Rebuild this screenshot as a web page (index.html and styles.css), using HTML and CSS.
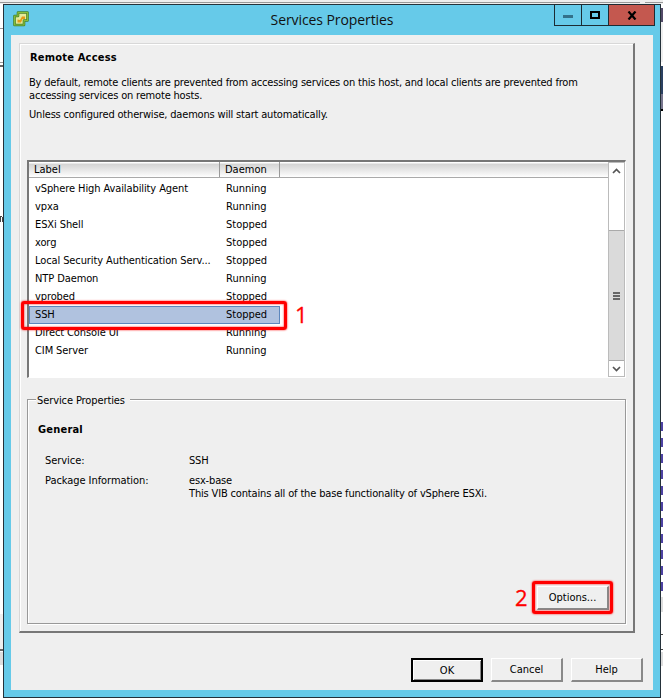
FILE: index.html
```html
<!DOCTYPE html>
<html lang="en">
<head>
<meta charset="utf-8">
<title>Services Properties</title>
<link rel="stylesheet" href="styles.css">
</head>
<body>
<svg class="backdrop" width="663" height="700" viewBox="0 0 663 700" shape-rendering="crispEdges" aria-hidden="true">
  <rect width="663" height="700" fill="#fff"/>
  <rect width="663" height="4" fill="#eee"/>
  <path d="M0 2.5H640M645 2.5H663" stroke="#999"/>
  <path d="M0 28.5H3M0 62.5H3M0 656.5H3" stroke="#999"/>
  <path d="M0 66H3" stroke="#666" stroke-width="2"/>
  <path d="M0.500 216V222M0 216.500H2M2.500 217V222" stroke="#444"/>
  <path d="M0 614H3V649H0z" fill="#eee"/>
  <path d="M0 649.500H3" stroke="#666" stroke-width="2"/>
  <path d="M0 652H3V665H0z" fill="#ddd"/>
  <path d="M661 8H663V22H661z" fill="#534a68"/>
  <path d="M661 22H663V62H661z" fill="#eee"/>
  <path d="M661 66H663V94H661z" fill="#2b4162"/>
  <path d="M661 94H663V109H661z" fill="#77758d"/>
  <path d="M661 110H663" stroke="#000" stroke-width="2"/>
  <path d="M662 422V596" stroke="#4e43a3" stroke-width="2" stroke-dasharray="9 7"/>
  <path d="M661 597H663V612H661z" fill="#ddd"/>
  <path d="M661 634.500H663M661 649.500H663" stroke="#444"/>
  <path d="M661 652H663V666H661z" fill="#ddd"/>
</svg>
<main class="window">
  <header class="titlebar">
    <svg class="app-icon" width="18" height="18" viewBox="0 0 18 18">
      <path d="M6 2.500H15.500V10.500H12V15H2.500V6H6z" fill="#e4eb9b" stroke="#46812c" stroke-width="2.600" stroke-linejoin="round"/>
      <path d="M6 2.500H15.500V10.500H12V15H2.500V6H6z" fill="none" stroke="#86bd38" stroke-width="1.200" stroke-linejoin="round"/>
      <path d="M5.500 9.500L8 10L10 6.500H13V9H10.500L9 12.500H5.500z" fill="#e69a17"/>
    </svg>
    <h1>Services Properties</h1>
    <div class="controls">
      <span class="ctl min"><i></i></span><span class="ctl max"><i></i></span><span class="ctl close"><svg width="10" height="9" viewBox="0 0 10 9"><path d="M1.500 .5L8.500 8.500M8.500 .5L1.500 8.500" stroke="#000" stroke-width="2.200"/></svg></span>
    </div>
  </header>
  <div class="client">
    <section class="panel">
      <h2>Remote Access</h2>
      <p class="intro">By default, remote clients are prevented from accessing services on this host, and local clients are prevented from<br>accessing services on remote hosts.</p>
      <p class="intro second">Unless configured otherwise, daemons will start automatically.</p>
      <div class="list">
        <div class="content">
          <div class="head"><span>Label</span><span>Daemon</span><span></span></div>
          <div class="rows">
            <div class="row"><span>vSphere High Availability Agent</span><span>Running</span></div>
            <div class="row"><span>vpxa</span><span>Running</span></div>
            <div class="row"><span>ESXi Shell</span><span>Stopped</span></div>
            <div class="row"><span>xorg</span><span>Stopped</span></div>
            <div class="row"><span>Local Security Authentication Serv...</span><span>Stopped</span></div>
            <div class="row"><span>NTP Daemon</span><span>Running</span></div>
            <div class="row"><span>vprobed</span><span>Stopped</span></div>
            <div class="row selected"><span>SSH</span><span>Stopped</span><b class="mark mark-row"></b><em class="num num-row">1</em></div>
            <div class="row"><span>Direct Console UI</span><span>Running</span></div>
            <div class="row"><span>CIM Server</span><span>Running</span></div>
          </div>
        </div>
        <div class="scroll">
          <span class="arrow"><svg width="9" height="6" viewBox="0 0 9 6"><path d="M1 5L4.500 1.500L8 5" fill="none" stroke="#555" stroke-width="1.700"/></svg></span>
          <span class="thumb"><i></i><i></i><i></i></span>
          <span class="arrow"><svg width="9" height="6" viewBox="0 0 9 6"><path d="M1 1L4.500 4.500L8 1" fill="none" stroke="#555" stroke-width="1.700"/></svg></span>
        </div>
      </div>
      <div class="group">
        <div class="legend">Service Properties</div>
        <h3>General</h3>
        <dl>
          <dt>Service:</dt><dd>SSH</dd>
          <dt>Package Information:</dt><dd>esx-base<br>This VIB contains all of the base functionality of vSphere ESXi.</dd>
        </dl>
        <div class="options"><button>Options...</button><b class="mark mark-opt"></b><em class="num num-opt">2</em></div>
      </div>
    </section>
    <footer><button class="default">OK</button><button>Cancel</button><button>Help</button></footer>
  </div>
</main>
</body>
</html>
```
FILE: styles.css
```css
* { box-sizing: border-box; }
body { margin: 0; width: 663px; height: 700px; padding: 4px 0 0 3px; overflow: hidden; position: relative; font: 11px/13px "DejaVu Sans Condensed", "DejaVu Sans", sans-serif; font-stretch: condensed; color: #000; }
h1, h2, h3, p, dl, dd { margin: 0; }
.backdrop { position: absolute; left: 0; top: 0; }
.window { position: relative; width: 658px; height: 694px; border: 1px solid #24313a; background: #66cae9; padding: 0 7px 7px; display: flex; flex-direction: column; }
.titlebar { height: 30px; flex: none; position: relative; display: flex; justify-content: center; }
.app-icon { position: absolute; left: 1px; top: 5px; }
h1 { font: 14px/29px "Open Sans", sans-serif; letter-spacing: -0.08px; color: #111; }
.controls { position: absolute; right: -2px; top: -1px; display: flex; height: 22px; border: 1px solid #1c2b33; }
.ctl { display: flex; align-items: center; justify-content: center; }
.min { width: 27px; border-right: 1px solid #1c2b33; }
.min i { width: 10px; height: 3px; background: #33718a; margin-top: 3px; }
.max { width: 26px; }
.max i { width: 10px; height: 8px; border: 2px solid #000; }
.close { width: 46px; background: #c4584f; border-left: 1px solid #1c2b33; }
.client { flex: 1; background: #efefef; padding: 8px 18px 0 8px; }
.panel { height: 590px; border: 1px solid #d8d8d8; border-right: 2px solid #777; border-bottom: 2px solid #777; box-shadow: inset 1px 1px #fff; padding: 7px 7px 0; }
h2, h3 { font-size: 11px; line-height: 14px; font-weight: bold; letter-spacing: 0.2px; }
h2 { margin-left: 3px; }
.intro { margin: 11px 0 0 2px; white-space: nowrap; letter-spacing: -0.18px; }
.intro.second { margin-top: 6px; }
.list { margin-top: 39px; height: 218px; width: 599px; border: 1px solid #fff; border-top: 2px solid #777; border-left: 2px solid #777; background: #fff; display: flex; }
.content { flex: 1; }
.head { height: 16px; display: flex; background: linear-gradient(#fff 0 1px, #d4d4d4 2px, #f4f4f4 12px, #fff); border-bottom: 1px solid #aaa; line-height: 15px; }
.head span { border-right: 1px solid #999; padding-left: 5px; width: 191px; }
.head span:nth-child(2) { width: 60px; }
.head span:nth-child(3) { border: 0; width: auto; }
.rows { padding-top: 2px; }
.row { position: relative; height: 18px; width: 251px; line-height: 18px; display: flex; white-space: nowrap; }
.row > span { width: 191px; padding-left: 6px; letter-spacing: -0.1px; }
.row > span + span { width: 60px; letter-spacing: 0; }
.selected { background: #b0c2df; box-shadow: inset 0 0 0 1px #5d87bd; }
.scroll { width: 17px; border: 1px solid #bbb; display: flex; flex-direction: column; }
.arrow { height: 15px; display: flex; align-items: center; justify-content: center; }
.thumb { flex: 1; margin-top: 52px; border: solid #aaa; border-width: 1px 0; background: #dadada; display: flex; flex-direction: column; gap: 1px; align-items: center; justify-content: center; }
.thumb i { width: 7px; height: 2px; background: #666; }
.group { height: 225px; width: 599px; margin: 21px 0 0; border: 1px solid #999; box-shadow: 1px 1px #fff, inset 1px 1px #fff; position: relative; padding: 23px 0 0 10px; }
.legend { position: absolute; left: 8px; top: -6px; background: #efefef; padding: 0 5px 0 1px; letter-spacing: -0.1px; }
dl { display: grid; grid-template-columns: 144px auto; row-gap: 7px; margin: 17px 0 0 7px; white-space: nowrap; letter-spacing: -0.16px; }
dt { letter-spacing: -0.06px; }
button { width: 72px; height: 24px; font: inherit; color: inherit; padding: 0; background: #efefef; border: 1px solid #fff; border-right: 2px solid #888; border-bottom: 2px solid #888; }
.default { border: 2px solid #000; box-shadow: inset 1px 1px #fff, inset -1px -1px #888; }
.options { position: absolute; right: 16px; bottom: 13px; width: 72px; height: 24px; }
.mark { position: absolute; border: 3px solid #f00; border-radius: 3px; box-shadow: 0 0 2px #f00, inset 0 0 2px #f00; }
.mark-row { left: -8px; top: -5px; width: 266px; height: 29px; z-index: 1; }
.mark-opt { left: -5px; top: -5px; width: 81px; height: 33px; }
.num { position: absolute; font: 22px/24px "Open Sans", sans-serif; color: #f00; -webkit-text-stroke: 0.3px #f00; }
.num-row { left: 266px; top: -4px; }
.num-opt { left: -22px; top: -1px; }
footer { display: flex; gap: 8px; justify-content: flex-end; margin: 25px -8px 0 0; }
```
